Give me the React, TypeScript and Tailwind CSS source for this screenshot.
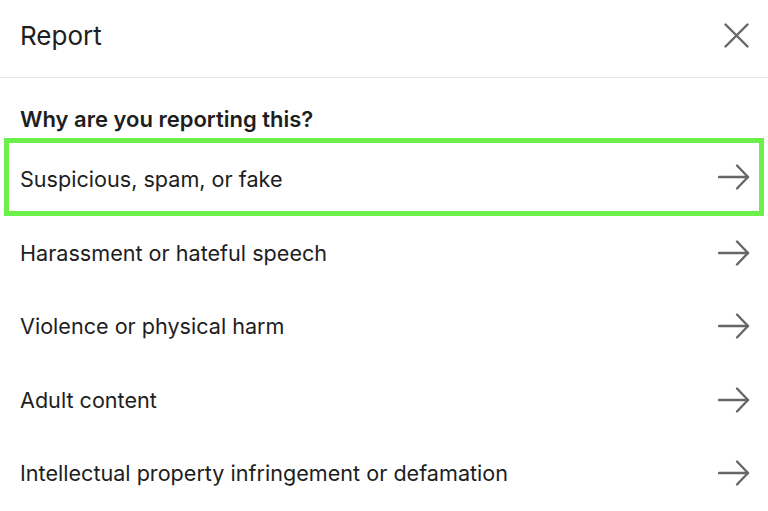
import React from "react";

const Arrow = () => (
  <svg width="32" height="28" viewBox="0 0 32 28" fill="none" className="shrink-0">
    <path d="M1 14 H30" stroke="#666" strokeWidth="2.4" strokeLinecap="round" />
    <path d="M19 2.5 L30 14 L19 25.5" stroke="#666" strokeWidth="2.4" strokeLinecap="round" strokeLinejoin="round" />
  </svg>
);

const Close = () => (
  <svg width="25" height="25" viewBox="0 0 25 25" fill="none">
    <path d="M1.5 1.5 L23.5 23.5 M23.5 1.5 L1.5 23.5" stroke="#666" strokeWidth="2.4" strokeLinecap="round" />
  </svg>
);

const items = [
  "Harassment or hateful speech",
  "Violence or physical harm",
  "Adult content",
  "Intellectual property infringement or defamation",
];

export default function App() {
  return (
    <div
      className="w-[768px] h-[511px] bg-white overflow-hidden text-[#1e1e1e]"
      style={{ fontFamily: "Inter, 'Liberation Sans', sans-serif" }}
    >
      <div className="h-[78px] flex items-center justify-between pl-5 pr-[19px] border-b border-[#e6e6e6]">
        <div className="text-[26px] leading-[32px] pb-[6px]">Report</div>
        <div className="pb-[6px]">
          <Close />
        </div>
      </div>
      <div className="pt-[29px] pb-[7px] pl-5">
        <div className="text-[22px] leading-[24px] font-semibold">Why are you reporting this?</div>
      </div>
      <div className="mx-[4px] h-[78px] border-[5px] border-[#6cf14a] flex items-center justify-between pl-[11px] pr-[9px]">
        <span className="text-[21.6px] leading-[26px] pt-[4px]">Suspicious, spam, or fake</span>
        <Arrow />
      </div>
      {items.map((t) => (
        <div key={t} className="h-[73.5px] flex items-center justify-between pl-5 pr-[18px]">
          <span className="text-[21.6px] leading-[26px]">{t}</span>
          <Arrow />
        </div>
      ))}
    </div>
  );
}
